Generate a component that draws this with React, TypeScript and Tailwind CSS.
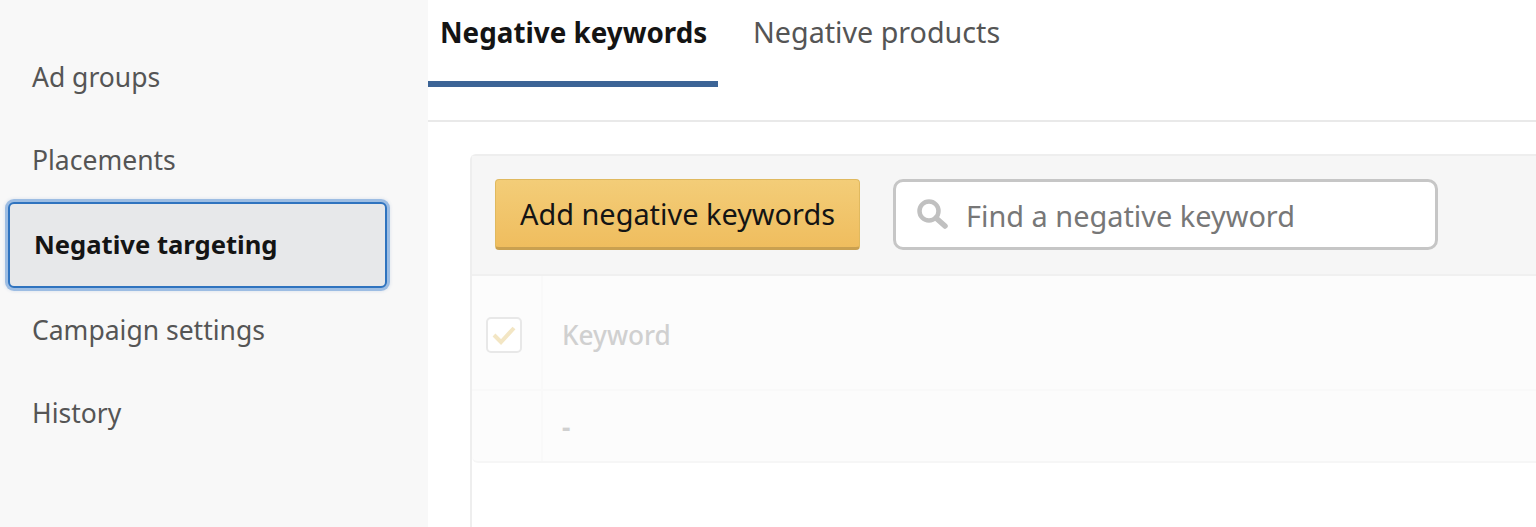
const navItems = ["Ad groups", "Placements", "Negative targeting", "Campaign settings", "History"];

function NavItem({ label, active }: { label: string; active: boolean }) {
  if (active) {
    return (
      <div className="mx-[8px] mb-[1px] flex h-[86px] w-[379px] items-center rounded-[6px] border-[2px] border-[#2f73bf] bg-[#e7e8ea] pl-[24px] text-[25.6px] font-bold text-[#141414] shadow-[0_0_0_3px_#9dbde3,0_0_3px_4px_#e4e9f0]">
        {label}
      </div>
    );
  }
  return <div className="flex h-[83px] items-center pl-[32px] text-[26.5px] text-[#555]">{label}</div>;
}

export default function App() {
  return (
    <div className="flex h-[527px] w-[1536px] overflow-hidden bg-white font-['Noto_Sans',sans-serif]">
      {/* Sidebar */}
      <div className="flex w-[428px] shrink-0 flex-col bg-[#f8f8f8] pt-[36px]">
        {navItems.map((item) => (
          <NavItem key={item} label={item} active={item === "Negative targeting"} />
        ))}
      </div>

      <div className="flex min-w-0 flex-1 flex-col">
        {/* Tabs */}
        <div className="flex h-[122px] shrink-0 items-start border-b-[2px] border-[#e9e9e9]">
          <div className="flex h-[87px] w-[290px] items-start border-b-[6px] border-[#3c6496] pl-[12px] pt-[12px] text-[27.8px] leading-[40px] font-bold text-[#141414]">
            Negative keywords
          </div>
          <div className="pl-[35px] pt-[12px] text-[28.7px] leading-[40px] text-[#555]">Negative products</div>
        </div>

        {/* Panel */}
        <div className="ml-[42px] mt-[32px] flex-1 rounded-tl-[6px] border-l-[2px] border-t-[2px] border-[#eeeeee]">
          <div className="flex h-[120px] items-center gap-[33px] border-b-[2px] border-[#f0f0f0] bg-[#f6f6f6] pb-[2px] pl-[23px]">
            <div className="flex h-[71px] w-[365px] items-center justify-center rounded-[4px] border border-[#e0b95f] border-b-[3px] border-b-[#c9a050] bg-gradient-to-b from-[#f3cd78] to-[#efbd5e] pt-[2px] text-[28.9px] text-[#141414]">
              Add negative keywords
            </div>
            <div className="flex h-[71px] w-[545px] items-center rounded-[10px] border-[3px] border-[#c6c6c6] bg-white pl-[20px] pt-[3px] text-[28.9px] text-[#777]">
              <svg className="mb-[3px] mr-[18px] shrink-0" width="32" height="32" viewBox="0 0 32 32" fill="none">
                <circle cx="13" cy="13" r="9.5" stroke="#c0c0c0" strokeWidth="4.5" />
                <path d="M20 20l9 8" stroke="#c0c0c0" strokeWidth="5.5" strokeLinecap="round" />
              </svg>
              Find a negative keyword
            </div>
          </div>

          <div className="flex h-[115px] border-b-[2px] border-[#f9f9f9] bg-[#fcfcfc]">
            <div className="flex w-[71px] shrink-0 items-center border-r-[2px] border-[#f9f9f9] pl-[14px] pt-[4px]">
              <div className="flex h-[36px] w-[36px] items-center justify-center rounded-[5px] border-[2px] border-[#e8e8e8] bg-white">
                <svg width="26" height="22" viewBox="0 0 26 22" fill="none">
                  <path d="M3 11l7 7L23 4" stroke="#f3e6c4" strokeWidth="4" />
                </svg>
              </div>
            </div>
            <div className="flex items-center pl-[19px] pt-[7px] text-[26.2px] font-medium text-[#d0d0d0]">Keyword</div>
          </div>

          <div className="flex h-[72px] rounded-bl-[6px] border-b-[2px] border-[#f6f6f6] bg-[#fcfcfc]">
            <div className="w-[71px] shrink-0 border-r-[2px] border-[#f9f9f9]" />
            <div className="flex items-center pl-[19px] pt-[2px] text-[26px] font-bold text-[#d0d0d0]">-</div>
          </div>
        </div>
      </div>
    </div>
  );
}
